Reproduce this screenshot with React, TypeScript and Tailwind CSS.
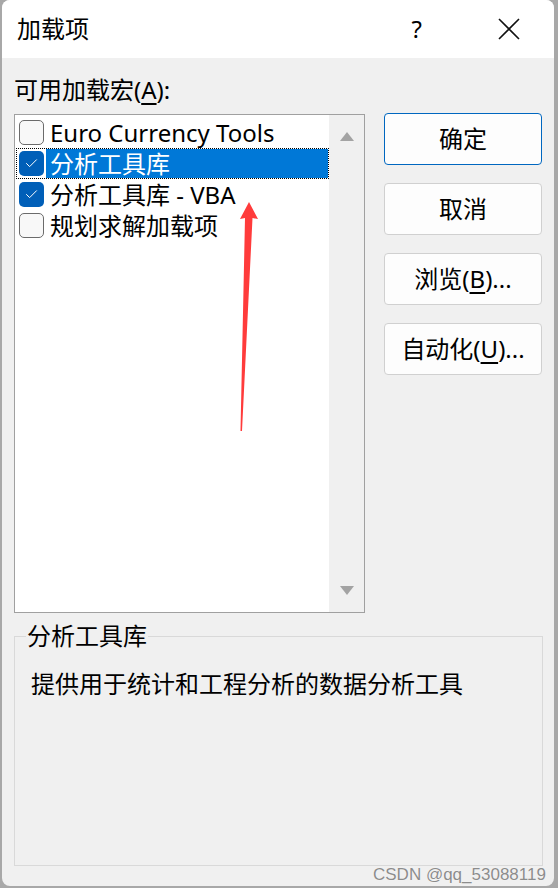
import { Check } from 'lucide-react'

const items = [
    { label: 'Euro Currency Tools', checked: false },
    { label: '分析工具库', checked: true, selected: true },
    { label: '分析工具库 - VBA', checked: true },
    { label: '规划求解加载项', checked: false },
]

function CheckBox({ checked }: { checked: boolean }) {
    if (checked) {
        return (
            <span className="flex h-[25px] w-[25px] shrink-0 items-center justify-center rounded-[5px] bg-[#005fb8]">
                <Check size={15} strokeWidth={1.6} className="text-white" />
            </span>
        )
    }
    return <span className="h-[25px] w-[25px] shrink-0 rounded-[5px] border-[1.5px] border-[#6b6b6b] bg-[#f8f8f8]" />
}

function DlgButton({ children, primary = false }: { children: React.ReactNode; primary?: boolean }) {
    return (
        <button
            className={`h-[52px] w-[158px] rounded-[4px] border bg-[#fdfdfd] text-[24px] text-black ${
                primary ? 'border-[#0067c0]' : 'border-[#d0d0d0]'
            }`}
        >
            {children}
        </button>
    )
}

export default function App() {
    return (
        <div className="relative h-[888px] w-[558px] bg-[#a8a8a8] font-[Noto_Sans,Noto_Sans_CJK_SC,sans-serif]">
            <div className="ml-[2px] flex h-[886px] w-[552px] flex-col overflow-hidden rounded-[8px] bg-[#f0f0f0]">
                {/* Title bar */}
                <div className="flex h-[58px] items-center bg-white pl-[15px]">
                    <span className="text-[24px] leading-none text-black">加载项</span>
                    <span className="ml-auto mr-[76px] text-[24px] leading-none text-black">?</span>
                    <svg width="22" height="22" viewBox="0 0 22 22" className="mr-[34px]">
                        <path d="M1 1 L21 21 M21 1 L1 21" stroke="#111" strokeWidth="1.6" />
                    </svg>
                </div>

                <div className="flex flex-col px-[12px] pt-[17px]">
                    <p className="text-[24px] leading-[30px] text-black">
                        可用加载宏(<span className="underline underline-offset-4">A</span>):
                    </p>

                    <div className="mt-[9px] flex gap-[19px]">
                        {/* List box */}
                        <div className="flex h-[499px] w-[351px] border border-[#a0a0a0] bg-white">
                            <div className="flex-1 pl-[1px] pt-[2px]">
                                {items.map((it) => (
                                    <div
                                        key={it.label}
                                        className={`flex h-[31px] items-center pl-[2px] ${
                                            it.selected ? 'border border-dotted border-black' : 'border border-transparent'
                                        }`}
                                    >
                                        <CheckBox checked={it.checked} />
                                        <span
                                            className={`ml-[2px] flex h-full flex-1 items-center pl-[4px] text-[24px] ${
                                                it.selected ? 'bg-[#0078d7] text-white' : 'text-black'
                                            }`}
                                        >
                                            {it.label}
                                        </span>
                                    </div>
                                ))}
                            </div>
                            <div className="flex w-[35px] flex-col items-center justify-between bg-[#f0f0f0] py-[17px]">
                                <svg width="14" height="9" viewBox="0 0 14 9">
                                    <path d="M7 0 L14 9 L0 9 Z" fill="#a3a3a3" />
                                </svg>
                                <svg width="14" height="9" viewBox="0 0 14 9">
                                    <path d="M0 0 L14 0 L7 9 Z" fill="#a3a3a3" />
                                </svg>
                            </div>
                        </div>

                        {/* Buttons */}
                        <div className="-mt-[1px] flex flex-col gap-[18px]">
                            <DlgButton primary>确定</DlgButton>
                            <DlgButton>取消</DlgButton>
                            <DlgButton>
                                浏览(<span className="underline underline-offset-4">B</span>)...
                            </DlgButton>
                            <DlgButton>
                                自动化(<span className="underline underline-offset-4">U</span>)...
                            </DlgButton>
                        </div>
                    </div>

                    {/* Group box */}
                    <fieldset className="mt-[11px] h-[242px] w-[529px] border border-[#d9d9d9] pl-[11px]">
                        <legend className="px-[1px] text-[24px] leading-[24px] text-black">分析工具库</legend>
                        <p className="pl-[5px] pt-[21px] text-[24px] leading-[30px] text-black">
                            提供用于统计和工程分析的数据分析工具
                        </p>
                    </fieldset>
                </div>
            </div>

            {/* red annotation arrow */}
            <svg className="pointer-events-none absolute left-0 top-0" width="558" height="888">
                <polygon
                    points="249,202 258,219 252.5,218 242,431 240.5,431 245,218 240,219"
                    fill="#ff3b3b"
                />
            </svg>

            {/* watermark */}
            <span className="absolute left-[373px] top-[864px] font-[Liberation_Sans,Arial,sans-serif] text-[17px] leading-[22px] text-[#8c8c8c] [text-shadow:0_0_1px_#fff]">
                CSDN @qq_53088119
            </span>
        </div>
    )
}
